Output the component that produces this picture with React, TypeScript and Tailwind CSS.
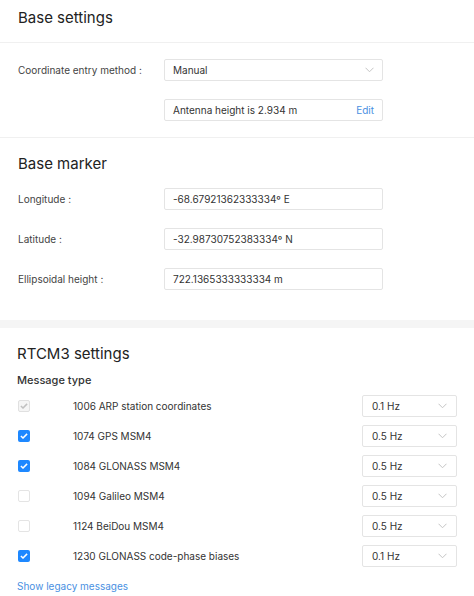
import { useState } from 'react';

const font = { fontFamily: 'Inter, "Noto Sans", sans-serif' };

function Chevron() {
  return (
    <svg width="9" height="6" viewBox="0 0 9 6" fill="none" className="shrink-0">
      <path d="M0.5 0.75 L4.5 4.75 L8.5 0.75" stroke="#c4c4c4" strokeWidth="1" />
    </svg>
  );
}

function Check({ color }: { color: string }) {
  return (
    <svg width="8" height="6" viewBox="0 0 8 6" fill="none">
      <path d="M0.9 3 L3 5 L7.1 0.9" stroke={color} strokeWidth="1.5" />
    </svg>
  );
}

const messages = [
  { id: '1006 ARP station coordinates', rate: '0.1 Hz', checked: true, disabled: true },
  { id: '1074 GPS MSM4', rate: '0.5 Hz', checked: true },
  { id: '1084 GLONASS MSM4', rate: '0.5 Hz', checked: true },
  { id: '1094 Galileo MSM4', rate: '0.5 Hz', checked: false },
  { id: '1124 BeiDou MSM4', rate: '0.5 Hz', checked: false },
  { id: '1230 GLONASS code-phase biases', rate: '0.1 Hz', checked: true },
];

function FieldRow({ label, children }: { label?: string; children: React.ReactNode }) {
  return (
    <div className="flex items-center h-[22px]">
      <div className="w-[146px] shrink-0 text-[10px] text-[#444]">
        {label && (
          <>
            {label}
            <span className="ml-[3px]">:</span>
          </>
        )}
      </div>
      <div className="w-[219px] h-[22px] border border-[#e4e4e4] rounded-[2px] bg-white flex items-center px-[8px] text-[10px] text-[#333]">
        {children}
      </div>
    </div>
  );
}

export default function App() {
  const [rows, setRows] = useState(messages);

  const toggle = (i: number) => {
    if (rows[i].disabled) return;
    setRows(rows.map((r, j) => (j === i ? { ...r, checked: !r.checked } : r)));
  };

  return (
    <div className="w-[474px] h-[596px] bg-white overflow-hidden" style={font}>
      <div className="h-[43px] border-b border-[#f0f0f0] px-[18px] flex items-center">
        <h2 className="text-[15px] font-normal text-[#222] leading-none -mt-[8px]">Base settings</h2>
      </div>

      <div className="px-[18px] pt-[16px] pb-[16px] flex flex-col gap-[18px] border-b border-[#f0f0f0]">
        <FieldRow label="Coordinate entry method">
          <span className="flex-1">Manual</span>
          <Chevron />
        </FieldRow>
        <FieldRow>
          <span className="flex-1">Antenna height is 2.934 m</span>
          <span className="text-[#4a90e2]">Edit</span>
        </FieldRow>
      </div>

      <div className="px-[18px] pt-[17px] pb-[30px]">
        <h2 className="text-[15px] font-normal text-[#222] leading-[18px] mb-[15px]">Base marker</h2>
        <div className="flex flex-col gap-[18px]">
          <FieldRow label="Longitude">-68.67921362333334º E</FieldRow>
          <FieldRow label="Latitude">-32.98730752383334º N</FieldRow>
          <FieldRow label="Ellipsoidal height">722.1365333333334 m</FieldRow>
        </div>
      </div>

      <div className="h-[8px] bg-[#f5f5f5]" />

      <div className="px-[17px] pt-[17px]">
        <h2 className="text-[15px] font-normal text-[#222] leading-[18px]">RTCM3 settings</h2>
        <div className="mt-[9px] text-[11px] font-medium text-[#333] leading-[16px]">Message type</div>
        <div className="mt-[7px] flex flex-col gap-[8px]">
          {rows.map((m, i) => (
            <div key={m.id} className="flex items-center h-[22px]">
              <button
                onClick={() => toggle(i)}
                className={
                  m.disabled
                    ? 'w-[12px] h-[12px] ml-[1px] rounded-[2px] border border-[#e0e0e0] bg-[#f5f5f5] flex items-center justify-center'
                    : m.checked
                    ? 'w-[12px] h-[12px] ml-[1px] rounded-[2px] bg-[#1e88ff] flex items-center justify-center'
                    : 'w-[12px] h-[12px] ml-[1px] rounded-[2px] border border-[#e4e4e4] bg-white'
                }
              >
                {m.checked && <Check color={m.disabled ? '#c0c0c0' : '#ffffff'} />}
              </button>
              <span className="ml-[43px] flex-1 text-[10px] text-[#333]">{m.id}</span>
              <div className="w-[95px] h-[22px] border border-[#e4e4e4] rounded-[2px] flex items-center px-[9px] text-[10px] text-[#333]">
                <span className="flex-1">{m.rate}</span>
                <Chevron />
              </div>
            </div>
          ))}
        </div>
        <div className="mt-[12px] text-[10px] text-[#4a90e2] leading-[14px]">Show legacy messages</div>
      </div>
    </div>
  );
}
